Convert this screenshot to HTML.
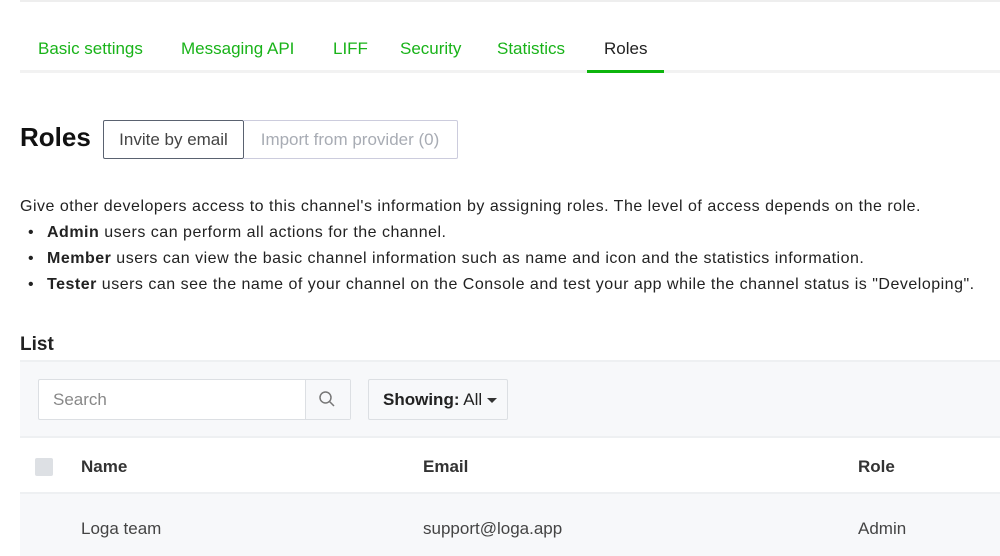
<!DOCTYPE html>
<html><head><style>
*{margin:0;padding:0;box-sizing:border-box}
body{width:1000px;height:556px;overflow:hidden;background:#fff;font-family:"Liberation Sans",Arial,sans-serif;color:#111;position:relative}
.a{position:absolute;white-space:nowrap}
.tab{position:absolute;top:39px;font-size:17px;color:#19b319}
.p{font-size:16px;line-height:26px;color:#222;letter-spacing:0.5px}
.li{position:absolute;left:28px}
.li span{position:absolute;left:19px}
</style></head><body>
<div class="a" style="left:20px;top:0;width:980px;height:2px;background:#eee"></div>
<span class="tab" style="left:38px">Basic settings</span>
<span class="tab" style="left:181px">Messaging API</span>
<span class="tab" style="left:333px">LIFF</span>
<span class="tab" style="left:400px">Security</span>
<span class="tab" style="left:497px">Statistics</span>
<span class="tab" style="left:604px;color:#222">Roles</span>
<div class="a" style="left:20px;top:70px;width:980px;height:3px;background:#f2f2f2"></div>
<div class="a" style="left:587px;top:70px;width:77px;height:3px;background:#0db50d"></div>
<div class="a" style="left:20px;top:122px;font-size:26px;font-weight:bold;color:#111">Roles</div>
<div class="a" style="left:103px;top:120px;width:141px;height:39px;border:1px solid #5a6270;border-radius:2px;font-size:17px;color:#444;text-align:center;line-height:37px">Invite by email</div>
<div class="a" style="left:243px;top:120px;width:215px;height:39px;border:1px solid #ccd;border-left:none;border-radius:0 2px 2px 0;font-size:17px;color:#a8acb4;text-align:center;line-height:37px">Import from provider (0)</div>
<div class="a p" style="left:20px;top:194px">Give other developers access to this channel's information by assigning roles. The level of access depends on the role.</div>
<div class="a p li" style="top:220px">•<span><b>Admin</b> users can perform all actions for the channel.</span></div>
<div class="a p li" style="top:246px">•<span><b>Member</b> users can view the basic channel information such as name and icon and the statistics information.</span></div>
<div class="a p li" style="top:272px">•<span><b>Tester</b> users can see the name of your channel on the Console and test your app while the channel status is "Developing".</span></div>
<div class="a" style="left:20px;top:334px;font-size:19px;font-weight:bold;color:#222">List</div>
<div class="a" style="left:20px;top:360px;width:980px;height:78px;background:#f7f8fa;border-top:2px solid #eef0f2;border-bottom:2px solid #eef0f2"></div>
<div class="a" style="left:38px;top:379px;width:313px;height:41px;background:#fff;border:1px solid #dcdfe3;border-radius:2px"></div>
<div class="a" style="left:53px;top:390px;font-size:17px;color:#888">Search</div>
<div class="a" style="left:305px;top:380px;width:45px;height:39px;border-left:1px solid #dcdfe3;background:#f7f8fa"></div>
<svg class="a" style="left:318px;top:390px" width="18" height="18" viewBox="0 0 18 18"><circle cx="7.5" cy="7.5" r="5.5" fill="none" stroke="#777" stroke-width="1.5"/><path d="M11.5 11.5L16 16" stroke="#777" stroke-width="1.5"/></svg>
<div class="a" style="left:368px;top:379px;width:140px;height:41px;background:#f7f8fa;border:1px solid #dcdfe3;border-radius:2px;font-size:17px;line-height:39px;padding-left:14px;color:#222"><b>Showing:</b> All <span style="display:inline-block;border:5px solid transparent;border-top:5px solid #333;border-bottom:none;vertical-align:middle"></span></div>
<div class="a" style="left:35px;top:458px;width:18px;height:18px;background:#dde0e4;border-radius:2px"></div>
<div class="a" style="left:81px;top:457px;font-size:17px;font-weight:bold;color:#333">Name</div>
<div class="a" style="left:423px;top:457px;font-size:17px;font-weight:bold;color:#333">Email</div>
<div class="a" style="left:858px;top:457px;font-size:17px;font-weight:bold;color:#333">Role</div>
<div class="a" style="left:20px;top:492px;width:980px;height:64px;background:#f7f8fa;border-top:2px solid #eef0f2"></div>
<div class="a" style="left:81px;top:519px;font-size:17px;color:#444">Loga team</div>
<div class="a" style="left:423px;top:519px;font-size:17px;color:#444">support@loga.app</div>
<div class="a" style="left:858px;top:519px;font-size:17px;color:#444">Admin</div>
</body></html>
